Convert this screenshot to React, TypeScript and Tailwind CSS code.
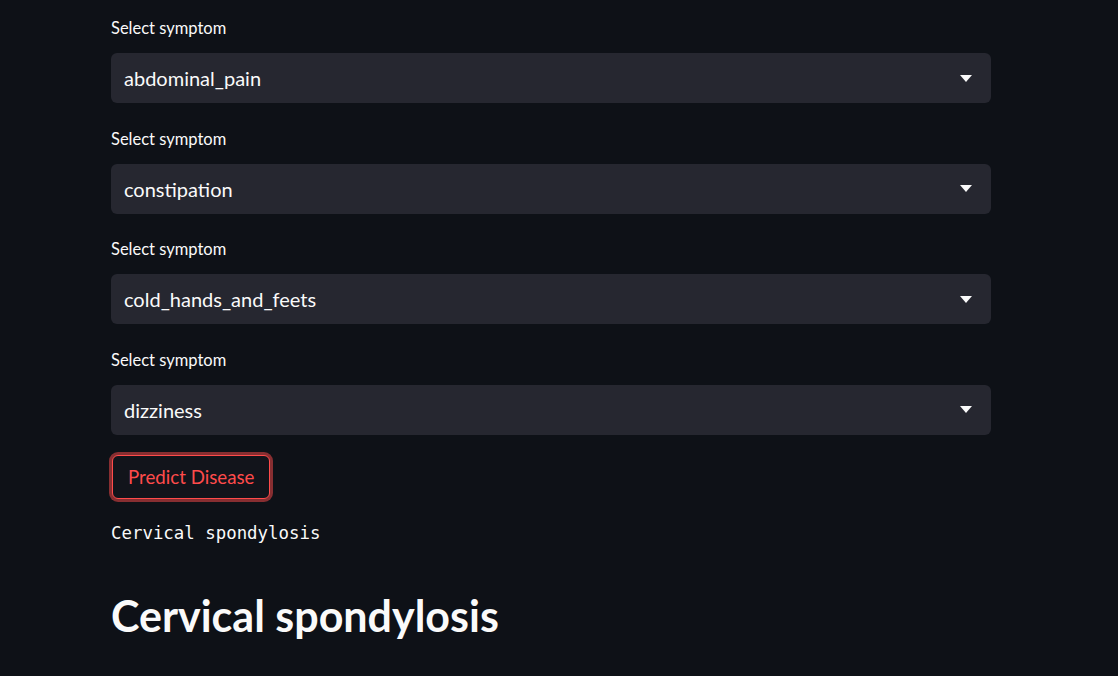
const symptoms = ['abdominal_pain', 'constipation', 'cold_hands_and_feets', 'dizziness']

function Caret() {
  return (
    <svg width="12" height="7" viewBox="0 0 12 7" aria-hidden>
      <path d="M0 0h12L6 7z" fill="#fafafa" />
    </svg>
  )
}

function SelectBox({ value }: { value: string }) {
  return (
    <div className="mb-[24.67px]">
      <label className="flex h-[23px] items-center text-[16.5px] text-[#fafafa]">Select symptom</label>
      <div className="mt-[13px] flex h-[50px] items-center justify-between rounded-md bg-[#262730] pl-[13px] pr-[19px]">
        <span className="text-[20px] text-[#fafafa]">{value}</span>
        <Caret />
      </div>
    </div>
  )
}

export default function App() {
  return (
    <div
      className="min-h-[676px] w-full bg-[#0e1117] text-[#fafafa]"
      style={{ fontFamily: 'Lato, "Open Sans", sans-serif' }}
    >
      <div className="w-[880px] pt-[17px]" style={{ marginLeft: 111 }}>
        {symptoms.map((s) => (
          <SelectBox key={s} value={s} />
        ))}
        <button className="-mt-[5px] ml-[1px] flex h-[44px] items-center rounded-md border border-[#ff4b4b] bg-[#12141b] px-[15px] text-[18.7px] text-[#ff4b4b] shadow-[0_0_0_3px_rgba(255,75,75,0.5)]">
          Predict Disease
        </button>
        <p
          className="mt-[21px] text-[17.4px] text-[#fafafa]"
          style={{ fontFamily: '"DejaVu Sans Mono", monospace' }}
        >
          Cervical spondylosis
        </p>
        <h1 className="mt-[48px] text-[43px] font-bold leading-none text-[#fafafa]">Cervical spondylosis</h1>
      </div>
    </div>
  )
}
